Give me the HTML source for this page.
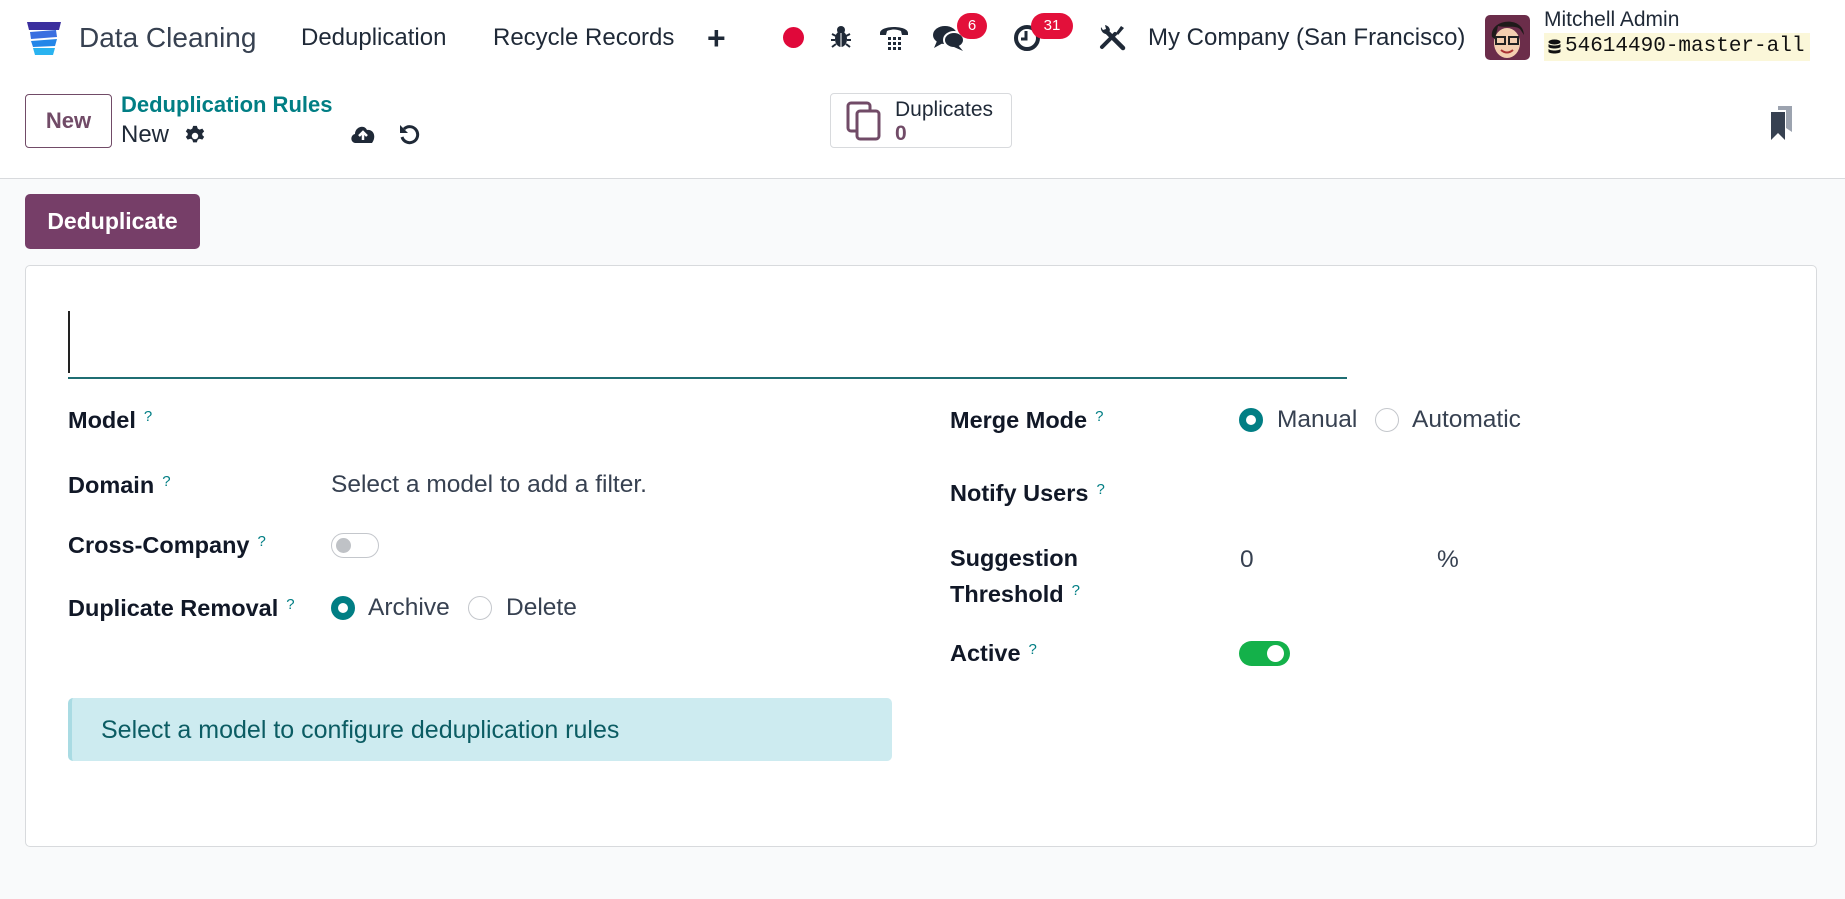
<!DOCTYPE html>
<html><head><meta charset="utf-8">
<style>
*{margin:0;padding:0;box-sizing:border-box}
html,body{width:1845px;height:899px;overflow:hidden;background:#f9fafb;font-family:"Liberation Sans",sans-serif;color:#374151}
.a{position:absolute;white-space:nowrap}
.top{position:absolute;left:0;top:0;width:1845px;height:179px;background:#fff;border-bottom:1px solid #d8dadd}
.nav{font-size:24px;color:#1f2937;line-height:30px}
.lbl{font-size:23.5px;font-weight:bold;color:#111827;line-height:30px}
.lbl sup{color:#017e84;font-size:15px;font-weight:normal;margin-left:8px;position:relative;top:-7px;vertical-align:baseline}
.val{font-size:24.5px;color:#374151;line-height:30px}
.radio{position:absolute;width:24px;height:24px;border-radius:50%}
.on{border:7px solid #017e84;background:#fff}
.off{border:1px solid #c4c7cc;background:#fff}
.badge{position:absolute;background:#e3103a;color:#fff;font-size:15px;border-radius:13px;height:26px;line-height:26px;text-align:center}
</style></head><body>
<div class="top"></div>
<svg class="a" style="left:26px;top:21px" width="36" height="34" viewBox="0 0 36 34">
<path d="M1 1H35L33 9H3Z" fill="#3b2f9e"/>
<path d="M4 11L30 9L31 16L5 18Z" fill="#3b6fe0"/>
<path d="M5 20L31 18L29 25L7 26Z" fill="#2486e8"/>
<path d="M7 27H29L27 34H9Z" fill="#2ab3f0"/>
</svg>
<div class="a" style="left:79px;top:21px;font-size:28px;color:#374151;line-height:34px">Data Cleaning</div>
<div class="a nav" style="left:301px;top:23px">Deduplication</div>
<div class="a nav" style="left:493px;top:23px">Recycle Records</div>
<div class="a" style="left:707px;top:21px;font-size:32px;font-weight:bold;color:#1f2937;line-height:34px">+</div>
<div class="a" style="left:783px;top:27px;width:21px;height:21px;border-radius:50%;background:#e0083a"></div>
<svg class="a" style="left:830px;top:24px" width="22" height="26" viewBox="0 0 22 26"><ellipse cx="11" cy="15" rx="6" ry="8" fill="#1f2937"/><circle cx="11" cy="6" r="4" fill="#1f2937"/><path d="M2 10L6 12M20 10L16 12M1 16H5M21 16H17M2 23L6 20M20 23L16 20" stroke="#1f2937" stroke-width="2"/><path d="M11 9V23" stroke="#fff" stroke-width="1"/></svg>
<svg class="a" style="left:878px;top:22px" width="32" height="30" viewBox="0 0 32 30"><path d="M2 11C2 3 30 3 30 11L30 13L24 13L23 9C18 7 14 7 9 9L8 13L2 13Z" fill="#1f2937"/><g fill="#1f2937"><rect x="10" y="15" width="3" height="3"/><rect x="15" y="15" width="3" height="3"/><rect x="20" y="15" width="3" height="3"/><rect x="10" y="20" width="3" height="3"/><rect x="15" y="20" width="3" height="3"/><rect x="20" y="20" width="3" height="3"/><rect x="10" y="25" width="3" height="3"/><rect x="15" y="25" width="3" height="3"/><rect x="20" y="25" width="3" height="3"/></g></svg>
<svg class="a" style="left:932px;top:23px" width="34" height="30" viewBox="0 0 34 30"><ellipse cx="13" cy="12" rx="12" ry="9" fill="#1f2937"/><path d="M5 18L2 25L11 20Z" fill="#1f2937"/><ellipse cx="22" cy="17" rx="10" ry="8" fill="#1f2937" stroke="#fff" stroke-width="2"/><path d="M26 22L31 28L22 24Z" fill="#1f2937"/></svg>
<div class="badge" style="left:957px;top:13px;width:30px">6</div>
<svg class="a" style="left:1013px;top:24px" width="28" height="28" viewBox="0 0 28 28"><circle cx="14" cy="14" r="11" fill="none" stroke="#1f2937" stroke-width="4"/><path d="M13 7V15H8" stroke="#1f2937" stroke-width="3" fill="none"/></svg>
<div class="badge" style="left:1031px;top:13px;width:42px">31</div>
<svg class="a" style="left:1098px;top:23px" width="28" height="28" viewBox="0 0 28 28"><path d="M9 9L25 25" stroke="#1f2937" stroke-width="4.5" stroke-linecap="round"/><path d="M3 4A6 6 0 0 0 10 11L12 7A6 6 0 0 0 7 2L8 6L5 7Z" fill="#1f2937"/><path d="M4 24L17 11" stroke="#1f2937" stroke-width="4" stroke-linecap="round"/><path d="M18 10L23 3L26 5L20 12Z" fill="#1f2937"/></svg>
<div class="a nav" style="left:1148px;top:23px">My Company (San Francisco)</div>
<svg class="a" style="left:1485px;top:15px" width="45" height="45" viewBox="0 0 45 45"><rect width="45" height="45" rx="5" fill="#6b2d4a"/><ellipse cx="22" cy="28" rx="13" ry="15" fill="#f4cfb0"/><path d="M7 22C4 4 38 0 39 20L35 14C30 10 20 13 13 11L10 24Z" fill="#1f1a1a"/><rect x="11" y="22" width="9" height="7" fill="none" stroke="#222" stroke-width="2"/><rect x="24" y="22" width="9" height="7" fill="none" stroke="#222" stroke-width="2"/><path d="M16 35Q22 40 28 35" stroke="#a33" stroke-width="2" fill="none"/></svg>
<div class="a" style="left:1544px;top:8px;font-size:21px;color:#1f2937;line-height:24px">Mitchell Admin</div>
<div class="a" style="left:1544px;top:33px;width:266px;height:28px;background:#fbf7d9"></div>
<svg class="a" style="left:1548px;top:39px" width="13" height="17" viewBox="0 0 13 17"><ellipse cx="6.5" cy="3" rx="6" ry="2.5" fill="#111"/><path d="M0.5 5V8C2 10 11 10 12.5 8V5C11 7 2 7 0.5 5ZM0.5 10V13C2 15 11 15 12.5 13V10C11 12 2 12 0.5 10Z" fill="#111"/></svg>
<div class="a" style="left:1565px;top:33px;font-family:'Liberation Mono',monospace;font-size:21px;color:#111;line-height:28px">54614490-master-all</div>

<div class="a" style="left:25px;top:94px;width:87px;height:54px;border:1px solid #714b67;border-radius:4px;color:#714b67;font-size:22px;font-weight:bold;text-align:center;line-height:52px">New</div>
<div class="a" style="left:121px;top:92px;font-size:22px;font-weight:bold;color:#017e84;line-height:26px">Deduplication Rules</div>
<div class="a" style="left:121px;top:121px;font-size:24px;color:#1f2937;line-height:28px">New</div>
<svg class="a" style="left:184px;top:125px" width="22" height="22" viewBox="0 0 24 24"><path fill="#1f2937" d="M10 1h4l1 3 2 1 3-1 2 3-2 2v2l2 2-2 3-3-1-2 1-1 3h-4l-1-3-2-1-3 1-2-3 2-2v-2l-2-2 2-3 3 1 2-1z"/><circle cx="12" cy="12" r="3.5" fill="#fff"/></svg>
<svg class="a" style="left:350px;top:124px" width="26" height="20" viewBox="0 0 26 20"><path d="M6 19C0 19 0 11 5 10C5 3 14 0 17 6C23 5 27 12 22 19Z" fill="#1f2937"/><path d="M13 16V9M9 12L13 8L17 12" stroke="#fff" stroke-width="2.5" fill="none"/></svg>
<svg class="a" style="left:398px;top:123px" width="22" height="22" viewBox="0 0 22 22"><path d="M6 6A8 8 0 1 1 4 14" stroke="#1f2937" stroke-width="3" fill="none"/><path d="M2 2V10H10Z" fill="#1f2937"/></svg>
<div class="a" style="left:830px;top:93px;width:182px;height:55px;border:1px solid #d8dadd;border-radius:4px;background:#fff"></div>
<svg class="a" style="left:846px;top:101px" width="36" height="40" viewBox="0 0 36 40"><rect x="2" y="2" width="22" height="28" rx="3" fill="none" stroke="#714b67" stroke-width="3"/><rect x="11" y="10" width="22" height="28" rx="3" fill="#fff" stroke="#714b67" stroke-width="3"/></svg>
<div class="a" style="left:895px;top:98px;font-size:21px;color:#1f2937;line-height:24px">Duplicates</div>
<div class="a" style="left:895px;top:122px;font-size:21px;font-weight:bold;color:#714b67;line-height:24px">0</div>
<svg class="a" style="left:1770px;top:106px" width="24" height="34" viewBox="0 0 24 34"><path d="M8 0H22V26L16 22V4H8Z" fill="#9ca3af"/><path d="M1 6H15V34L8 27L1 34Z" fill="#374151"/></svg>

<div class="a" style="left:25px;top:194px;width:175px;height:55px;background:#763e68;border-radius:5px;color:#fff;font-size:23px;font-weight:bold;text-align:center;line-height:55px">Deduplicate</div>
<div class="a" style="left:25px;top:265px;width:1792px;height:582px;background:#fff;border:1px solid #d8dadd;border-radius:5px"></div>
<div class="a" style="left:68px;top:311px;width:2px;height:62px;background:#222"></div>
<div class="a" style="left:68px;top:377px;width:1279px;height:2px;background:#1f6e73"></div>

<div class="a lbl" style="left:68px;top:405px">Model<sup>?</sup></div>
<div class="a lbl" style="left:68px;top:470px">Domain<sup>?</sup></div>
<div class="a val" style="left:331px;top:470px">Select a model to add a filter.</div>
<div class="a lbl" style="left:68px;top:530px">Cross-Company<sup>?</sup></div>
<div class="a" style="left:331px;top:533px;width:48px;height:25px;border:1px solid #c4c7cc;border-radius:13px;background:#fff"></div>
<div class="a" style="left:336px;top:538px;width:15px;height:15px;border-radius:50%;background:#bfc2c6"></div>
<div class="a lbl" style="left:68px;top:593px">Duplicate Removal<sup>?</sup></div>
<div class="radio on" style="left:331px;top:596px"></div>
<div class="a val" style="left:368px;top:593px">Archive</div>
<div class="radio off" style="left:468px;top:596px"></div>
<div class="a val" style="left:506px;top:593px">Delete</div>

<div class="a" style="left:68px;top:698px;width:824px;height:63px;background:#cdebf0;border-left:4px solid #a9dbe3;border-radius:5px"></div>
<div class="a" style="left:101px;top:715px;font-size:25px;color:#0b5c63;line-height:30px">Select a model to configure deduplication rules</div>

<div class="a lbl" style="left:950px;top:405px">Merge Mode<sup>?</sup></div>
<div class="radio on" style="left:1239px;top:408px"></div>
<div class="a val" style="left:1277px;top:405px">Manual</div>
<div class="radio off" style="left:1375px;top:408px"></div>
<div class="a val" style="left:1412px;top:405px">Automatic</div>
<div class="a lbl" style="left:950px;top:478px">Notify Users<sup>?</sup></div>
<div class="a lbl" style="left:950px;top:543px">Suggestion</div>
<div class="a val" style="left:1240px;top:545px">0</div>
<div class="a val" style="left:1437px;top:545px">%</div>
<div class="a lbl" style="left:950px;top:579px">Threshold<sup>?</sup></div>
<div class="a lbl" style="left:950px;top:638px">Active<sup>?</sup></div>
<div class="a" style="left:1239px;top:641px;width:51px;height:25px;border-radius:13px;background:#14b14a"></div>
<div class="a" style="left:1267px;top:645px;width:17px;height:17px;border-radius:50%;background:#fff"></div>
</body></html>
